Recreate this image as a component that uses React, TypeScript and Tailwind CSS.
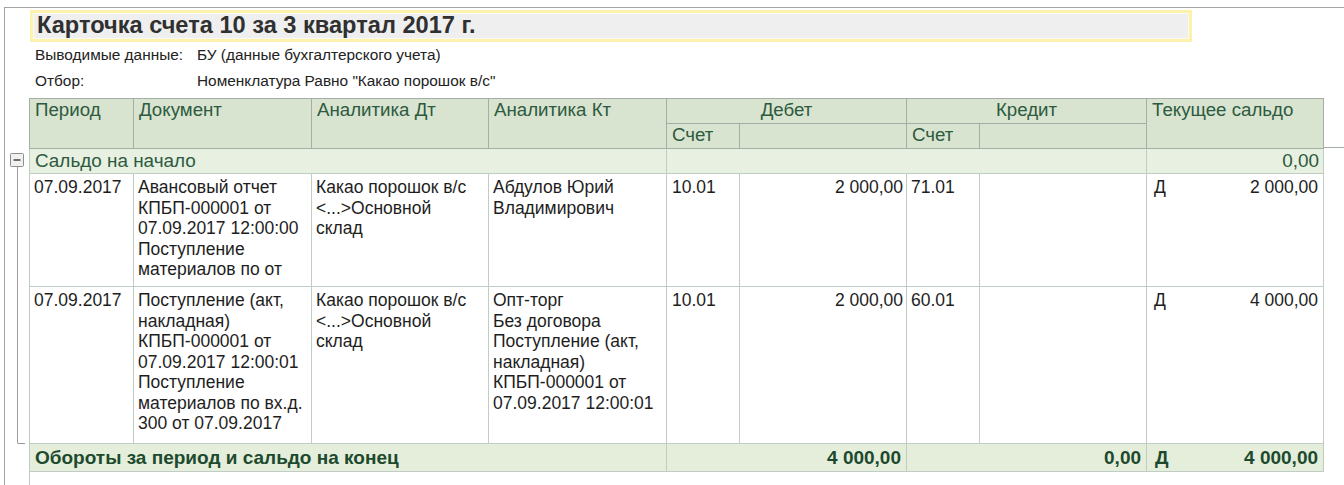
import React from 'react';

type Row = {
  period: string;
  doc: string[];
  dt: string[];
  kt: string[];
  dAcc: string;
  dSum: string;
  kAcc: string;
  saldo: string;
  h: string;
};

const rows: Row[] = [
  {
    period: '07.09.2017',
    doc: ['Авансовый отчет', 'КПБП-000001 от', '07.09.2017 12:00:00', 'Поступление', 'материалов по от'],
    dt: ['Какао порошок в/с', '<...>Основной', 'склад'],
    kt: ['Абдулов Юрий', 'Владимирович'],
    dAcc: '10.01',
    dSum: '2 000,00',
    kAcc: '71.01',
    saldo: '2 000,00',
    h: 'h-[113px]',
  },
  {
    period: '07.09.2017',
    doc: [
      'Поступление (акт,',
      'накладная)',
      'КПБП-000001 от',
      '07.09.2017 12:00:01',
      'Поступление',
      'материалов по вх.д.',
      '300 от 07.09.2017',
    ],
    dt: ['Какао порошок в/с', '<...>Основной', 'склад'],
    kt: ['Опт-торг', 'Без договора', 'Поступление (акт,', 'накладная)', 'КПБП-000001 от', '07.09.2017 12:00:01'],
    dAcc: '10.01',
    dSum: '2 000,00',
    kAcc: '60.01',
    saldo: '4 000,00',
    h: 'h-[157px]',
  },
];

const th = 'bg-[#d8e4d0] border border-[#a5aea5] text-[#2d5a40] text-[18.7px] font-normal leading-[22px] align-top px-[5px] text-left';
const td = 'border border-[#bfcdc5] align-top px-[4px] pt-[3px] leading-[20.5px] text-[17.5px] text-[#1e1e1e]';

function Lines({ items }: { items: string[] }) {
  return (
    <>
      {items.map((t, i) => (
        <div key={i} className="whitespace-nowrap">
          {t}
        </div>
      ))}
    </>
  );
}

function TreeGutter() {
  return (
    <div className="w-[24px] shrink-0">
      <svg width="24" height="390" className="block">
        <line x1="12.5" y1="69" x2="12.5" y2="345" stroke="#9c9c9c" strokeWidth="1" />
        <line x1="12.5" y1="345.5" x2="20" y2="345.5" stroke="#9c9c9c" strokeWidth="1" />
        <rect x="5.5" y="55.5" width="13" height="13" rx="1" fill="#f1f1ee" stroke="#8e8e8e" />
        <line x1="8.5" y1="62" x2="15.5" y2="62" stroke="#444" strokeWidth="1.5" />
      </svg>
    </div>
  );
}

export default function App() {
  return (
    <div className="w-[1344px] h-[485px] overflow-hidden bg-white pt-[7px] pl-[4px] font-['Liberation_Sans',Arial,sans-serif]">
      <div className="h-full border-t border-l border-[#a3a3a3]">
        <div className="ml-[25px] mt-[2px] w-[1162px] h-[32px] border-[3px] border-[#fcf1ad]">
          <div className="h-full border border-[#fbfbf2] bg-[#efefef] pl-[3px] flex items-center">
            <span className="text-[23.6px] font-bold text-[#303030] leading-none">
              Карточка счета 10 за 3 квартал 2017 г.
            </span>
          </div>
        </div>

        <div className="ml-[30px] text-[15.4px] text-[#222] leading-[26px]">
          <div className="flex">
            <span className="w-[162px]">Выводимые данные:</span>
            <span>БУ (данные бухгалтерского учета)</span>
          </div>
          <div className="flex">
            <span className="w-[162px]">Отбор:</span>
            <span>Номенклатура Равно "Какао порошок в/с"</span>
          </div>
        </div>

        <div className="flex mt-[4px]">
          <TreeGutter />
          <div className="flex flex-col">
            <table className="border-collapse table-fixed w-[1294px]">
              <colgroup>
                <col className="w-[104px]" />
                <col className="w-[178px]" />
                <col className="w-[177px]" />
                <col className="w-[178px]" />
                <col className="w-[73px]" />
                <col className="w-[167px]" />
                <col className="w-[73px]" />
                <col className="w-[167px]" />
                <col className="w-[177px]" />
              </colgroup>
              <thead>
                <tr className="h-[25px]">
                  <th rowSpan={2} className={th}>Период</th>
                  <th rowSpan={2} className={th}>Документ</th>
                  <th rowSpan={2} className={th}>Аналитика Дт</th>
                  <th rowSpan={2} className={th}>Аналитика Кт</th>
                  <th colSpan={2} className={`${th} !text-center`}>Дебет</th>
                  <th colSpan={2} className={`${th} !text-center`}>Кредит</th>
                  <th rowSpan={2} className={th}>Текущее сальдо</th>
                </tr>
                <tr className="h-[25px]">
                  <th className={th}>Счет</th>
                  <th className={th}></th>
                  <th className={th}>Счет</th>
                  <th className={th}></th>
                </tr>
              </thead>
              <tbody>
                <tr className="h-[25px] bg-[#e7f0e1] text-[#2d5a40] text-[18.9px] leading-[22px]">
                  <td colSpan={4} className="border border-[#bfcdc5] px-[5px] align-middle">
                    Сальдо на начало
                  </td>
                  <td colSpan={4} className="border border-[#bfcdc5]"></td>
                  <td className="border border-[#bfcdc5] text-right pr-[4px] align-middle">0,00</td>
                </tr>
                {rows.map((r, i) => (
                  <tr key={i} className={r.h}>
                    <td className={td}>{r.period}</td>
                    <td className={td}>
                      <Lines items={r.doc} />
                    </td>
                    <td className={td}>
                      <Lines items={r.dt} />
                    </td>
                    <td className={td}>
                      <Lines items={r.kt} />
                    </td>
                    <td className={`${td} pl-[5px]`}>{r.dAcc}</td>
                    <td className={`${td} text-right !pr-[3px]`}>{r.dSum}</td>
                    <td className={td}>{r.kAcc}</td>
                    <td className={td}></td>
                    <td className={td}>
                      <div className="flex justify-between pl-[3px] pr-[1px]">
                        <span>Д</span>
                        <span>{r.saldo}</span>
                      </div>
                    </td>
                  </tr>
                ))}
                <tr className="h-[28px] bg-[#e4eedb] text-[#1d4a2e] font-bold text-[19px] leading-[22px]">
                  <td colSpan={4} className="border border-[#bfcdc5] px-[5px] align-middle">
                    Обороты за период и сальдо на конец
                  </td>
                  <td colSpan={2} className="border border-[#bfcdc5] text-right pr-[5px] align-middle">
                    4 000,00
                  </td>
                  <td colSpan={2} className="border border-[#bfcdc5] text-right pr-[5px] align-middle">
                    0,00
                  </td>
                  <td className="border border-[#bfcdc5] align-middle">
                    <div className="flex justify-between pl-[8px] pr-[5px]">
                      <span>Д</span>
                      <span>4 000,00</span>
                    </div>
                  </td>
                </tr>
              </tbody>
            </table>
            <div className="h-[40px] border-l border-[#bfcdc5]"></div>
          </div>
          <div className="flex-1 h-[50px] border-b border-[#a5aea5]"></div>
        </div>
      </div>
    </div>
  );
}
